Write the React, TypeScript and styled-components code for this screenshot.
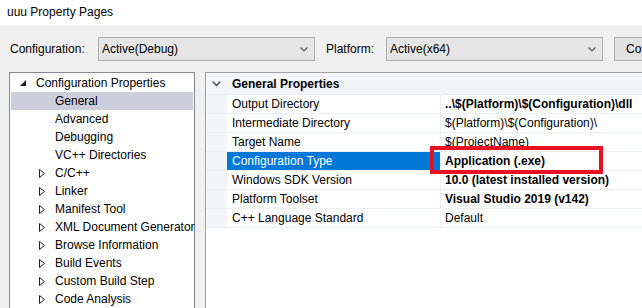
import React from 'react';
import styled, { createGlobalStyle } from 'styled-components';

const GlobalStyle = createGlobalStyle`
  html, body {
    margin: 0;
    padding: 0;
    overflow: hidden;
  }
  body {
    font-family: "Liberation Sans", Arial, sans-serif;
    font-size: 12px;
    color: #000;
    background: #f0f0f0;
  }
`;

const Window = styled.div`
  width: 642px;
  height: 308px;
  display: flex;
  flex-direction: column;
  overflow: hidden;
  background: #f0f0f0;
`;

const TitleBar = styled.div`
  height: 25px;
  flex: none;
  background: #fff;
  display: flex;
  align-items: center;
  padding-left: 7px;
  padding-bottom: 1px;
  box-sizing: border-box;
`;

const Toolbar = styled.div`
  flex: none;
  height: 47px;
  display: flex;
  align-items: flex-start;
  padding: 12px 0 0 10px;
  box-sizing: border-box;
  white-space: nowrap;
  overflow: hidden;
`;

const Label = styled.span<{ $width: number }>`
  width: ${(p) => p.$width}px;
  flex: none;
  line-height: 25px;
`;

const Select = styled.div<{ $gap: number }>`
  flex: none;
  width: 217px;
  height: 24px;
  box-sizing: border-box;
  border: 1px solid #adadad;
  background: #e5e5e5;
  display: flex;
  align-items: center;
  justify-content: space-between;
  padding: 0 6px 0 3px;
  margin-right: ${(p) => p.$gap}px;
`;

const ToolButton = styled.div`
  flex: none;
  width: 120px;
  height: 24px;
  box-sizing: border-box;
  border: 1px solid #adadad;
  background: #e1e1e1;
  line-height: 22px;
  padding-left: 11px;
`;

const Body = styled.div`
  flex: 1;
  min-height: 0;
  display: flex;
  align-items: flex-start;
  gap: 10px;
  padding-left: 9px;
`;

const TreePanel = styled.div`
  flex: none;
  width: 186px;
  height: 260px;
  box-sizing: border-box;
  border: 1px solid #828790;
  background: #fff;
  padding: 1px 1px 0;
`;

const TreeRow = styled.div<{ $indent: number; $selected?: boolean }>`
  height: 18px;
  display: flex;
  align-items: center;
  padding-left: ${(p) => p.$indent}px;
  background: ${(p) => (p.$selected ? '#cccedb' : 'transparent')};
  white-space: nowrap;
`;

const Expander = styled.span`
  width: 16px;
  flex: none;
  display: flex;
  align-items: center;
`;

const GridPanel = styled.div`
  flex: none;
  width: 460px;
  height: 260px;
  box-sizing: border-box;
  border: 1px solid #a0a0a0;
  background: #fff;
`;

const HeaderRow = styled.div`
  height: 21px;
  display: flex;
  align-items: center;
  background: #f3f5f9;
  border-bottom: 1px solid #eceff4;
  font-weight: bold;
`;

const HeaderTitle = styled.span`
  padding-left: 5px;
`;

const Gutter = styled.span`
  width: 21px;
  flex: none;
  align-self: stretch;
  display: flex;
  align-items: center;
  justify-content: center;
  background: #f3f5f9;
`;

const PropRow = styled.div`
  height: 18px;
  display: flex;
  border-bottom: 1px solid #eceff4;
`;

const NameCell = styled.span<{ $selected?: boolean }>`
  width: 214px;
  flex: none;
  box-sizing: border-box;
  padding-left: 5px;
  line-height: 18px;
  border-right: 1px solid #eceff4;
  background: ${(p) => (p.$selected ? '#0078d7' : '#fff')};
  color: ${(p) => (p.$selected ? '#fff' : '#000')};
  white-space: nowrap;
`;

const ValueCell = styled.span<{ $bold?: boolean }>`
  position: relative;
  flex: 1;
  padding-left: 4px;
  line-height: 18px;
  font-weight: ${(p) => (p.$bold ? 'bold' : 'normal')};
  white-space: nowrap;
`;

const Highlight = styled.span`
  position: absolute;
  left: -11px;
  top: -6px;
  width: 173px;
  height: 28px;
  box-sizing: border-box;
  border: 4px solid #e81123;
  pointer-events: none;
`;

const Chevron = () => (
  <svg width="8" height="5" viewBox="0 0 8 5">
    <path d="M0.5 0.5 L4 4 L7.5 0.5" fill="none" stroke="#555" strokeWidth="1.1" />
  </svg>
);

const treeItems: { label: string; kind: 'leaf' | 'collapsed'; selected?: boolean }[] = [
  { label: 'General', kind: 'leaf', selected: true },
  { label: 'Advanced', kind: 'leaf' },
  { label: 'Debugging', kind: 'leaf' },
  { label: 'VC++ Directories', kind: 'leaf' },
  { label: 'C/C++', kind: 'collapsed' },
  { label: 'Linker', kind: 'collapsed' },
  { label: 'Manifest Tool', kind: 'collapsed' },
  { label: 'XML Document Generator', kind: 'collapsed' },
  { label: 'Browse Information', kind: 'collapsed' },
  { label: 'Build Events', kind: 'collapsed' },
  { label: 'Custom Build Step', kind: 'collapsed' },
  { label: 'Code Analysis', kind: 'collapsed' },
];

const props: { name: string; value: string; bold?: boolean; selected?: boolean }[] = [
  { name: 'Output Directory', value: '..\\$(Platform)\\$(Configuration)\\dll', bold: true },
  { name: 'Intermediate Directory', value: '$(Platform)\\$(Configuration)\\' },
  { name: 'Target Name', value: '$(ProjectName)' },
  { name: 'Configuration Type', value: 'Application (.exe)', bold: true, selected: true },
  { name: 'Windows SDK Version', value: '10.0 (latest installed version)', bold: true },
  { name: 'Platform Toolset', value: 'Visual Studio 2019 (v142)', bold: true },
  { name: 'C++ Language Standard', value: 'Default' },
];

export default function App() {
  return (
    <Window>
      <GlobalStyle />
      <TitleBar>uuu Property Pages</TitleBar>
      <Toolbar>
        <Label $width={88}>Configuration:</Label>
        <Select $gap={11}>
          <span>Active(Debug)</span>
          <Chevron />
        </Select>
        <Label $width={60}>Platform:</Label>
        <Select $gap={11}>
          <span>Active(x64)</span>
          <Chevron />
        </Select>
        <ToolButton>Configuration Manager...</ToolButton>
      </Toolbar>
      <Body>
        <TreePanel>
          <TreeRow $indent={9}>
            <Expander>
              <svg width="6" height="6" viewBox="0 0 6 6">
                <polygon points="6,0 6,6 0,6" fill="#1e1e1e" />
              </svg>
            </Expander>
            Configuration Properties
          </TreeRow>
          {treeItems.map((item) => (
            <TreeRow key={item.label} $indent={28} $selected={item.selected}>
              <Expander>
                {item.kind === 'collapsed' && (
                  <svg width="6" height="9" viewBox="0 0 6 9">
                    <polygon points="0.5,0.5 5.5,4.5 0.5,8.5" fill="none" stroke="#1e1e1e" strokeWidth="1" />
                  </svg>
                )}
              </Expander>
              {item.label}
            </TreeRow>
          ))}
        </TreePanel>
        <GridPanel>
          <HeaderRow>
            <Gutter>
              <svg width="9" height="6" viewBox="0 0 9 6">
                <path d="M0.8 0.8 L4.5 4.5 L8.2 0.8" fill="none" stroke="#444" strokeWidth="1.5" />
              </svg>
            </Gutter>
            <HeaderTitle>General Properties</HeaderTitle>
          </HeaderRow>
          {props.map((p) => (
            <PropRow key={p.name}>
              <Gutter />
              <NameCell $selected={p.selected}>{p.name}</NameCell>
              <ValueCell $bold={p.bold}>
                {p.value}
                {p.selected && <Highlight />}
              </ValueCell>
            </PropRow>
          ))}
        </GridPanel>
      </Body>
    </Window>
  );
}
